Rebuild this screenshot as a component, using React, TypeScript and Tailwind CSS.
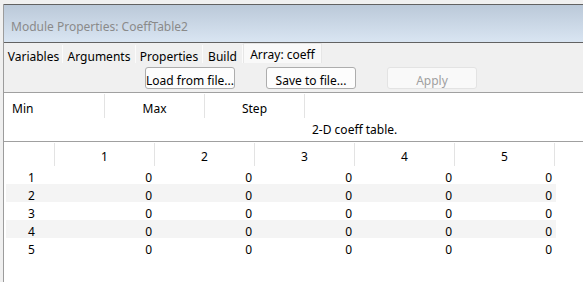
const tabs = [
  { label: 'Variables', w: 'w-[58px]' },
  { label: 'Arguments', w: 'w-[73px]' },
  { label: 'Properties', w: 'w-[67px]' },
  { label: 'Build', w: 'w-[40px]' },
];

const cols = [1, 2, 3, 4, 5];

export default function App() {
  return (
    <div className="w-[583px] h-[282px] overflow-hidden bg-[#f0f0f0] pt-[4px] pl-[3px] text-[12px] leading-none text-black font-['Noto_Sans',sans-serif]">
      <div className="flex h-full flex-col border-l border-[#9c9c9c]">
        {/* title bar */}
        <div className="flex h-[39px] shrink-0 items-center border-y border-[#626262] bg-gradient-to-b from-[#bbc9d9] to-[#d9e5f2] pl-[7px] pt-[6px] text-[#8a8a8a]">
          Module Properties: CoeffTable2
        </div>

        {/* tabs */}
        <div className="flex h-[20px] shrink-0 items-end pl-[1px]">
          {tabs.map((t) => (
            <div
              key={t.label}
              className={`${t.w} flex h-[18px] items-center justify-center border-r border-[#fbfbfb] bg-[#f0f0f0] pt-[5px]`}
            >
              {t.label}
            </div>
          ))}
          <div className="flex h-[20px] w-[79px] items-center justify-center border-x border-t border-[#e6e6e6] bg-[#f9f9f9] pt-[3px]">
            Array: coeff
          </div>
        </div>

        {/* buttons */}
        <div className="flex h-[29px] shrink-0 gap-[31px] pl-[141px] pt-[4px]">
          <button className="flex h-[22px] w-[90px] items-center justify-center rounded-[3px] border border-[#adadad] bg-[#fdfdfd] pt-[5px]">
            Load from file...
          </button>
          <button className="flex h-[22px] w-[90px] items-center justify-center rounded-[3px] border border-[#adadad] bg-[#fdfdfd] pt-[5px]">
            Save to file...
          </button>
          <button
            disabled
            className="flex h-[22px] w-[90px] items-center justify-center rounded-[3px] border border-[#e3e3e3] bg-[#f9f9f9] pt-[5px] text-[#a0a0a0]"
          >
            Apply
          </button>
        </div>

        {/* panel */}
        <div className="flex-1 border-t border-[#a0a0a0] bg-white">
          <div className="flex h-[26px] pt-[1px]">
            <div className="flex h-[24px] w-[101px] items-center border-r border-[#e3e3e3] pl-[8px] pt-[5px]">Min</div>
            <div className="flex h-[24px] w-[100px] items-center justify-center border-r border-[#e3e3e3] pt-[5px]">Max</div>
            <div className="flex h-[24px] w-[100px] items-center justify-center border-r border-[#e3e3e3] pt-[5px]">Step</div>
          </div>
          <div className="flex h-[22px] items-center pb-[1px] pl-[308px]">2-D coeff table.</div>

          <div className="border-t border-[#a0a0a0]">
            <div className="flex h-[24px] pt-[1px]">
              <div className="h-[23px] w-[51px] border-r border-[#e3e3e3]" />
              {cols.map((c) => (
                <div key={c} className="flex h-[23px] w-[100px] items-center justify-center border-r border-[#e3e3e3] pt-[4px]">
                  {c}
                </div>
              ))}
            </div>
            {cols.map((r) => (
              <div
                key={r}
                className={`ml-[2px] flex h-[18px] w-[550px] items-center pt-[5px] ${r % 2 === 0 ? 'bg-[#f4f4f4]' : ''}`}
              >
                <div className="w-[50px] pl-[1px] text-center">{r}</div>
                {cols.map((c) => (
                  <div key={c} className="w-[100px] pr-[4px] text-right">
                    0
                  </div>
                ))}
              </div>
            ))}
          </div>
        </div>
      </div>
    </div>
  );
}
